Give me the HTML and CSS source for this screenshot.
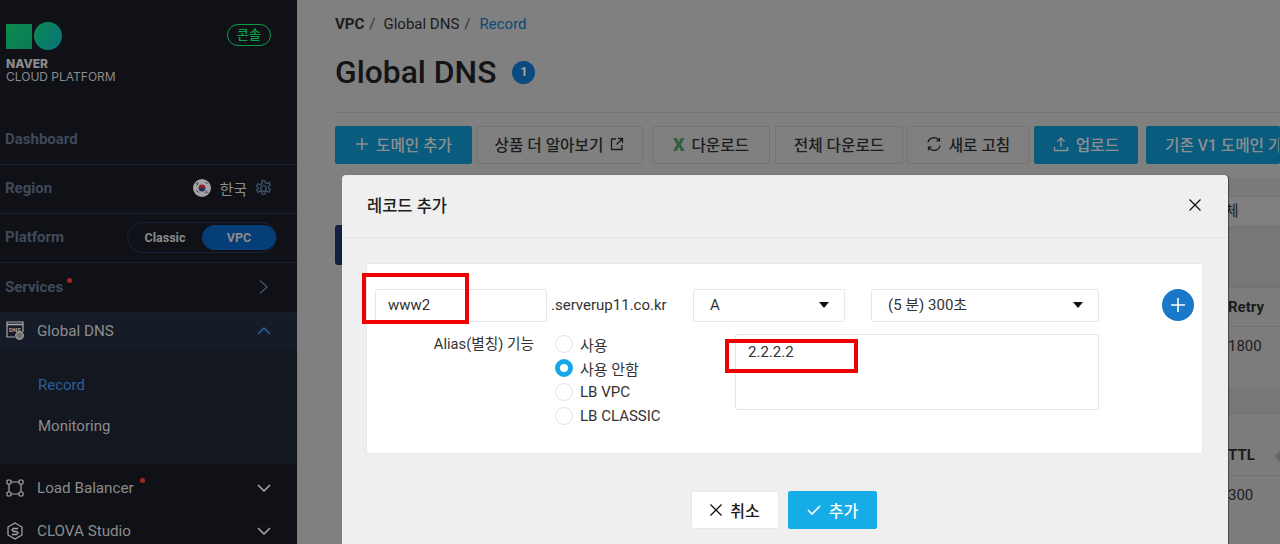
FILE: index.html
```html
<!DOCTYPE html>
<html lang="ko">
<head>
    <meta charset="UTF-8">
    <title>Global DNS Record</title>
    <link rel="stylesheet" href="styles.css">
</head>
<body>
    <aside class="sidebar">
        <div class="brand">
            <div class="brand-top">
                <div class="logo-marks">
                    <span class="logo-square"></span>
                    <span class="logo-circle"></span>
                </div>
                <span class="console-pill">콘솔</span>
            </div>
            <div class="logo-text"><b>NAVER</b><br>CLOUD PLATFORM</div>
        </div>

        <div class="side-row side-dash"><span class="side-title">Dashboard</span></div>
        <div class="side-row">
            <span class="side-title">Region</span>
            <div class="region">
                <svg class="flag" viewBox="0 0 18 18" width="18" height="18">
                    <circle cx="9" cy="9" r="9" fill="#a3a3a3"/>
                    <path d="M5.600 9a3.400 3.400 0 0 1 6.800 0z" fill="#8a1f2c"/>
                    <path d="M5.600 9a3.400 3.400 0 0 0 6.800 0z" fill="#1d2f66"/>
                    <path d="M3 5l2-2M3.500 6.500l2-2M12.500 3l2 2M12 13.500l2-2M3.500 11.500l2 2M13 14.500l1.500-1.500" stroke="#333" stroke-width="1"/>
                </svg>
                <span class="region-name">한국</span>
                <svg class="gear" viewBox="0.500 0.500 15 15" width="17" height="17" fill="none" stroke="#3f5068" stroke-width="1.200">
                    <circle cx="8" cy="8" r="2.500"/>
                    <path d="M6.800 1h2.400l.4 2 1.500.7 1.800-1 1.200 2.100-1.500 1.300v1.800l1.500 1.300-1.200 2.100-1.800-1-1.500.7-.4 2H6.800l-.4-2-1.500-.7-1.800 1-1.200-2.100 1.500-1.300V7.100L1.900 5.800l1.200-2.100 1.800 1 1.500-.7z"/>
                </svg>
            </div>
        </div>
        <div class="side-row">
            <span class="side-title">Platform</span>
            <div class="switch">
                <span class="switch-opt">Classic</span>
                <span class="switch-opt switch-on">VPC</span>
            </div>
        </div>
        <div class="side-row side-services">
            <span class="side-title">Services<i class="dot"></i></span>
            <svg class="chev" viewBox="0 0 12 16" width="12" height="16" fill="none" stroke="#3f5068" stroke-width="1.500"><path d="M2 1.500l7 6.500-7 6.500"/></svg>
        </div>

        <div class="menu-open">
            <div class="menu-item menu-active">
                <svg class="menu-icon" viewBox="0 0 18 19" width="18" height="19" fill="none" stroke="#a8a8a8" stroke-width="1.200">
                    <path d="M9 16H1V1h16v10"/>
                    <path d="M1 3.500h16" stroke-width="1.600"/>
                    <text class="dns-mini" x="3" y="10.500">DNS</text>
                    <circle cx="13.500" cy="14.500" r="3.800" fill="#6f6f6f" stroke="#a8a8a8"/>
                </svg>
                <span class="menu-label">Global DNS</span>
                <svg class="chev-v" viewBox="0 0 14 8" width="14" height="8" fill="none" stroke="#2b5f95" stroke-width="1.500"><path d="M1 7l6-6 6 6"/></svg>
            </div>
            <div class="sub-list">
                <div class="sub-item sub-current">Record</div>
                <div class="sub-item">Monitoring</div>
            </div>
        </div>
        <div class="menu-item menu-lb">
            <svg class="menu-icon" viewBox="0 0 18 18" width="18" height="18" fill="none" stroke="#a8a8a8" stroke-width="1.200">
                <rect x="1" y="1" width="4" height="4" rx="1"/>
                <rect x="13" y="1" width="4" height="4" rx="1"/>
                <rect x="1" y="13" width="4" height="4" rx="1"/>
                <rect x="13" y="13" width="4" height="4" rx="1"/>
                <path d="M5 3h8M5 15h8M3 5v8M15 5v8"/>
            </svg>
            <span class="menu-label">Load Balancer<i class="dot"></i></span>
            <svg class="chev-v" viewBox="0 0 14 8" width="14" height="8" fill="none" stroke="#a8a8a8" stroke-width="1.500"><path d="M1 1l6 6 6-6"/></svg>
        </div>
        <div class="menu-item">
            <svg class="menu-icon" viewBox="0 0 18 18" width="18" height="18" fill="none" stroke="#a8a8a8" stroke-width="1.200">
                <path d="M9 1l7 4v8l-7 4-7-4V5z"/>
                <path d="M12 6.500H7.500L6 8l1.500 1.500h3L12 11l-1.500 1.500H6" stroke-width="1.400"/>
            </svg>
            <span class="menu-label">CLOVA Studio</span>
            <svg class="chev-v" viewBox="0 0 14 8" width="14" height="8" fill="none" stroke="#a8a8a8" stroke-width="1.500"><path d="M1 1l6 6 6-6"/></svg>
        </div>
    </aside>

    <main class="content">
        <div class="crumbs">
            <b>VPC</b><span class="crumb-sep">/</span><span>Global DNS</span><span class="crumb-sep">/</span><span class="crumb-now">Record</span>
        </div>
        <div class="title-row">
            <h1>Global DNS</h1>
            <span class="count">1</span>
        </div>
        <div class="toolbar">
            <button class="tbtn tbtn-blue tbtn-add">
                <svg viewBox="0 0 14 14" width="14" height="14" stroke="#8f8f8f" stroke-width="1.500"><path d="M7 1v12M1 7h12"/></svg>도메인 추가
            </button>
            <button class="tbtn tbtn-more">상품 더 알아보기
                <svg viewBox="0 0 14 14" width="14" height="14" fill="none" stroke="#1c1c1c" stroke-width="1.300"><path d="M6 2H1.500v10.500H12V8M8 1.500h4.500V6M12.500 1.500L6.500 7.500"/></svg>
            </button>
            <button class="tbtn tbtn-x"><span class="x-mark">X</span>다운로드</button>
            <button class="tbtn tbtn-all">전체 다운로드</button>
            <button class="tbtn tbtn-refresh">
                <svg viewBox="0 0 16 16" width="16" height="16" fill="none" stroke="#1c1c1c" stroke-width="1.300"><path d="M2 6.500A6 6 0 0 1 13 4.500M14 9.500A6 6 0 0 1 3 11.500"/><path d="M13.500 1.800v3h-3M2.500 14.200v-3h3"/></svg>새로 고침
            </button>
            <button class="tbtn tbtn-blue tbtn-up">
                <svg viewBox="0 0 16 16" width="16" height="16" fill="none" stroke="#8f8f8f" stroke-width="1.400"><path d="M8 11V2M4.500 5.500L8 2l3.500 3.500M1.500 11v3.500h13V11"/></svg>업로드
            </button>
            <button class="tbtn tbtn-blue tbtn-v1">기존 V1 도메인 가져오기</button>
        </div>
        <div class="bg-panel">
            <span class="bg-tab"></span>
            <div class="bg-top"></div>
            <div class="bg-filter">전체</div>
            <div class="bg-band"></div>
            <div class="bg-row bg-head">Retry</div>
            <div class="bg-row bg-cell">1800</div>
            <div class="bg-band bg-band-low"></div>
            <div class="bg-row bg-head bg-head-ttl">TTL<span class="bg-sort"></span></div>
            <div class="bg-row bg-last">300</div>
        </div>
    </main>

    <section class="modal">
        <header class="modal-head">
            <h2>레코드 추가</h2>
            <svg class="modal-close" viewBox="0 0 12 12" width="12" height="12" stroke="#111" stroke-width="1.300"><path d="M.5.500l11 11M11.500.500l-11 11"/></svg>
        </header>
        <div class="modal-card">
            <div class="form-line">
                <div class="field field-host">www2</div>
                <span class="domain">.serverup11.co.kr</span>
                <div class="field field-type">A<i class="caret"></i></div>
                <div class="field field-ttl">(5 분) 300초<i class="caret"></i></div>
                <span class="add-round">
                    <svg viewBox="0 0 14 14" width="14" height="14" stroke="#fff" stroke-width="1.600"><path d="M7 0v14M0 7h14"/></svg>
                </span>
            </div>
            <div class="form-alias">
                <div class="alias-label">Alias(별칭) 기능</div>
                <div class="radios">
                    <label class="radio-line"><i class="radio"></i>사용</label>
                    <label class="radio-line"><i class="radio radio-on"></i>사용 안함</label>
                    <label class="radio-line"><i class="radio"></i>LB VPC</label>
                    <label class="radio-line"><i class="radio"></i>LB CLASSIC</label>
                </div>
                <div class="value-box">2.2.2.2</div>
            </div>
        </div>
        <div class="modal-foot">
            <button class="mbtn mbtn-cancel">
                <svg viewBox="0 0 12 12" width="12" height="12" stroke="#111" stroke-width="1.300"><path d="M.5.500l11 11M11.500.500l-11 11"/></svg>취소
            </button>
            <button class="mbtn mbtn-ok">
                <svg viewBox="0 0 14 10" width="14" height="10" fill="none" stroke="#fff" stroke-width="1.600"><path d="M1 5l4 4 8-8"/></svg>추가
            </button>
        </div>
    </section>

    <!-- red boxes drawn over the screenshot -->
    <div class="mark mark-host"></div>
    <div class="mark mark-value"></div>
</body>
</html>
```

FILE: styles.css
```css
* {
    box-sizing: border-box;
}
html, body {
    margin: 0;
    height: 544px;
    overflow: hidden;
}
body {
    display: flex;
    position: relative;
    font-family: Roboto, "Noto Sans CJK KR", sans-serif;
    font-size: 15px;
    color: #1c1c1c;
    background: #808080;
}
i {
    font-style: normal;
}
button {
    font-family: inherit;
}

/* sidebar */
.sidebar {
    width: 298px;
    flex: none;
    height: 544px;
    overflow: hidden;
    background: #0f1116;
    border-right: 1px solid #7a7a7a;
}
.brand {
    height: 115px;
    padding: 22px 26px 0 6px;
}
.brand-top {
    display: flex;
    justify-content: space-between;
    align-items: flex-start;
}
.logo-marks {
    display: flex;
    align-items: center;
    gap: 2px;
}
.logo-square {
    width: 26px;
    height: 25px;
    background: linear-gradient(135deg, #0c8a4c, #0a7a58);
}
.logo-circle {
    width: 28px;
    height: 28px;
    border-radius: 50%;
    background: linear-gradient(120deg, #0b8a4e, #08707f);
}
.console-pill {
    width: 44px;
    height: 22px;
    margin-top: 2px;
    border: 1px solid #0f9a4a;
    border-radius: 12px;
    color: #0fa24e;
    font-size: 13px;
    font-weight: 500;
    line-height: 19px;
    text-align: center;
}
.logo-text {
    margin-top: 7px;
    font-family: Inter, Roboto, sans-serif;
    font-size: 12px;
    line-height: 13px;
    color: #8c8c8c;
}
.logo-text b {
    font-weight: 800;
}
.side-row {
    display: flex;
    align-items: center;
    justify-content: space-between;
    height: 49px;
    padding: 0 25px 2px 5px;
    border-bottom: 1px solid #1a2230;
}
.side-dash {
    height: 50px;
}
.side-services {
    border-bottom: none;
    padding-right: 27px;
}
.side-title {
    position: relative;
    font-size: 15px;
    font-weight: 700;
    color: #3f4a5a;
}
.dot {
    position: absolute;
    top: 0;
    width: 5px;
    height: 5px;
    margin-left: 4px;
    border-radius: 50%;
    background: #a2281f;
}
.region {
    display: flex;
    align-items: center;
}
.flag {
    margin-right: 8px;
}
.region-name {
    margin-right: 8px;
    font-size: 15px;
    color: #8c8c8c;
}
.switch {
    display: flex;
    align-items: center;
    width: 150px;
    height: 31px;
    margin-right: -5px;
    padding: 1px 0 1px 0;
    border: 1px solid #14233a;
    border-radius: 16px;
}
.switch-opt {
    flex: 1;
    height: 25px;
    border-radius: 13px;
    font-size: 12.500px;
    font-weight: 700;
    line-height: 25px;
    text-align: center;
    color: #8c8c8c;
}
.switch-on {
    flex: none;
    width: 74px;
    background: #063e78;
}
.menu-open {
    height: 152px;
    background: #121720;
}
.menu-item {
    display: flex;
    align-items: center;
    height: 43px;
    padding: 0 26px 0 6px;
}
.menu-active {
    height: 38px;
    padding-bottom: 2px;
    background: #161c27;
    border-top: 1px solid #19202c;
}
.menu-lb {
    margin-top: 2px;
}
.menu-icon {
    flex: none;
    margin-right: 13px;
}
.dns-mini {
    font-size: 6px;
    font-weight: 700;
    fill: #a8a8a8;
    stroke: none;
}
.menu-label {
    position: relative;
    flex: 1;
    font-size: 15.200px;
    color: #8c8c8c;
}
.menu-lb .dot {
    top: -1px;
    margin-left: 6px;
}
.sub-list {
    padding: 15px 0 0 38px;
}
.sub-item {
    height: 41px;
    font-size: 15px;
    line-height: 41px;
    color: #8c8c8c;
}
.sub-current {
    color: #2a5f9b;
}

/* page behind the dialog */
.content {
    flex: 1;
    min-width: 0;
    overflow: hidden;
    padding: 14px 0 0 37px;
}
.crumbs {
    display: flex;
    align-items: center;
    height: 20px;
    font-size: 15px;
}
.crumb-sep {
    margin: 0 8px 0 5px;
    color: #333;
}
.crumb-now {
    margin-left: 1px;
    color: #0b4876;
}
.title-row {
    display: flex;
    align-items: center;
    height: 42px;
    margin-top: 17px;
    gap: 16px;
}
h1 {
    margin: 0;
    font-size: 31.800px;
    font-weight: 500;
    color: #141414;
}
.count {
    width: 23px;
    height: 23px;
    border-radius: 50%;
    background: #0b4a80;
    color: #aaa;
    font-size: 12px;
    font-weight: 700;
    line-height: 23px;
    text-align: center;
}
.toolbar {
    display: flex;
    width: 1000px;
    margin-top: 19px;
    padding-top: 13px;
    border-top: 1px solid #747474;
}
.tbtn {
    display: flex;
    flex: none;
    align-items: center;
    justify-content: center;
    gap: 7px;
    height: 38px;
    padding: 0 0 2px;
    border: 1px solid #747474;
    border-radius: 2px;
    background: #808080;
    color: #1c1c1c;
    font-size: 15.700px;
    font-weight: 500;
}
.tbtn-blue {
    border-color: #0a5c7e;
    background: #0a5c7e;
    color: #8f8f8f;
}
.tbtn-add {
    width: 137px;
    margin-right: 4px;
}
.tbtn-more {
    width: 167px;
    margin-right: 9px;
}
.tbtn-x {
    width: 118px;
    margin-right: 5px;
}
.tbtn-all {
    width: 128px;
    margin-right: 4px;
}
.tbtn-refresh {
    width: 122px;
    margin-right: 5px;
}
.tbtn-up {
    width: 104px;
    margin-right: 8px;
}
.tbtn-v1 {
    width: 134px;
    justify-content: flex-start;
    padding-left: 18px;
    white-space: nowrap;
    overflow: hidden;
}
.x-mark {
    color: #2f5f3c;
    font-size: 18px;
    font-weight: 900;
}
.bg-panel {
    position: relative;
    width: 992px;
    margin-top: 14px;
    margin-left: 8px;
}
.bg-top {
    height: 18px;
    background: #7a7a7a;
}
.bg-filter {
    height: 31px;
    padding-left: 869px;
    border-top: 1px solid #727272;
    border-bottom: 1px solid #727272;
    background: #7f7f7f;
    font-size: 14.500px;
    line-height: 29px;
}
.bg-tab {
    position: absolute;
    left: -8px;
    top: 47px;
    width: 8px;
    height: 40px;
    border-radius: 3px 0 0 3px;
    background: #14203f;
}
.bg-band {
    height: 60px;
    background: #777;
}
.bg-band-low {
    height: 25px;
}
.bg-row {
    height: 39px;
    padding-left: 885px;
    border-top: 1px solid #727272;
    background: #7c7c7c;
    font-size: 15px;
    line-height: 38px;
}
.bg-head {
    font-weight: 700;
}
.bg-cell {
    height: 62px;
}
.bg-head-ttl {
    position: relative;
    height: 62px;
    line-height: 82px;
}
.bg-sort {
    position: absolute;
    left: 934px;
    top: 37px;
    width: 11px;
    height: 11px;
    background: #666;
    transform: rotate(45deg);
}
.bg-last {
    height: 70px;
}

/* dialog */
.modal {
    position: absolute;
    left: 342px;
    top: 175px;
    width: 886px;
    height: 390px;
    border-radius: 4px 4px 0 0;
    background: #efefef;
    box-shadow: 1px 0 1px rgba(0, 0, 0, .45);
}
.modal-head {
    display: flex;
    align-items: center;
    justify-content: space-between;
    height: 63px;
    padding: 0 27px 3px 25px;
    border-bottom: 1px solid #e4e4e4;
}
h2 {
    margin: 0;
    font-size: 16.500px;
    font-weight: 500;
    color: #1c1c1c;
}
.modal-card {
    margin: 25px 25px 0 24px;
    height: 191px;
    padding: 25px 8px 0 8px;
    border: 1px solid #e8e8e8;
    border-radius: 3px;
    background: #fff;
}
.form-line {
    display: flex;
    align-items: flex-start;
}
.field {
    position: relative;
    height: 33px;
    padding-left: 16px;
    border: 1px solid #e8e8e8;
    border-radius: 2px;
    font-size: 15px;
    line-height: 30px;
    color: #333;
}
.field-host {
    width: 172px;
    padding-left: 12px;
}
.domain {
    width: 146px;
    padding-left: 4px;
    font-size: 15px;
    line-height: 32px;
    color: #333;
}
.field-type {
    width: 152px;
    margin-right: 26px;
}
.field-ttl {
    width: 228px;
    margin-right: 63px;
}
.caret {
    position: absolute;
    right: 15px;
    top: 12px;
    border: 5px solid transparent;
    border-top: 6px solid #111;
    border-bottom: none;
}
.add-round {
    display: flex;
    align-items: center;
    justify-content: center;
    width: 32px;
    height: 32px;
    border-radius: 50%;
    background: #1a78c8;
}
.form-alias {
    display: flex;
    align-items: flex-start;
    margin-top: 12px;
}
.alias-label {
    width: 159px;
    font-size: 14.700px;
    line-height: 20px;
    text-align: right;
    color: #333;
}
.radios {
    width: 200px;
    margin-top: -2px;
    margin-left: 21px;
}
.radio-line {
    display: flex;
    align-items: center;
    gap: 7px;
    height: 24px;
    font-size: 15px;
    color: #333;
}
.radio {
    width: 18px;
    height: 18px;
    border: 1px solid #e4e4e4;
    border-radius: 50%;
    background: #fff;
}
.radio-on {
    border: 5px solid #16a8e6;
}
.value-box {
    width: 364px;
    height: 76px;
    margin-left: -20px;
    padding: 8px 12px;
    border: 1px solid #e4e4e4;
    border-radius: 2px;
    font-size: 15px;
    line-height: 18px;
    color: #333;
}
.modal-foot {
    display: flex;
    justify-content: center;
    gap: 9px;
    margin-top: 37px;
    padding-right: 2px;
}
.mbtn {
    display: flex;
    align-items: center;
    justify-content: center;
    gap: 8px;
    height: 38px;
    padding: 0;
    border: 1px solid #e8e8e8;
    border-radius: 2px;
    font-size: 16px;
    font-weight: 500;
}
.mbtn-cancel {
    width: 88px;
    background: #fff;
    color: #1c1c1c;
}
.mbtn-ok {
    width: 89px;
    border-color: #16ace8;
    background: #16ace8;
    color: #fff;
}

/* annotations */
.mark {
    position: absolute;
    border: 4px solid #f00000;
}
.mark-host {
    left: 362px;
    top: 273px;
    width: 107px;
    height: 51px;
}
.mark-value {
    left: 725px;
    top: 339px;
    width: 133px;
    height: 34px;
}
```
